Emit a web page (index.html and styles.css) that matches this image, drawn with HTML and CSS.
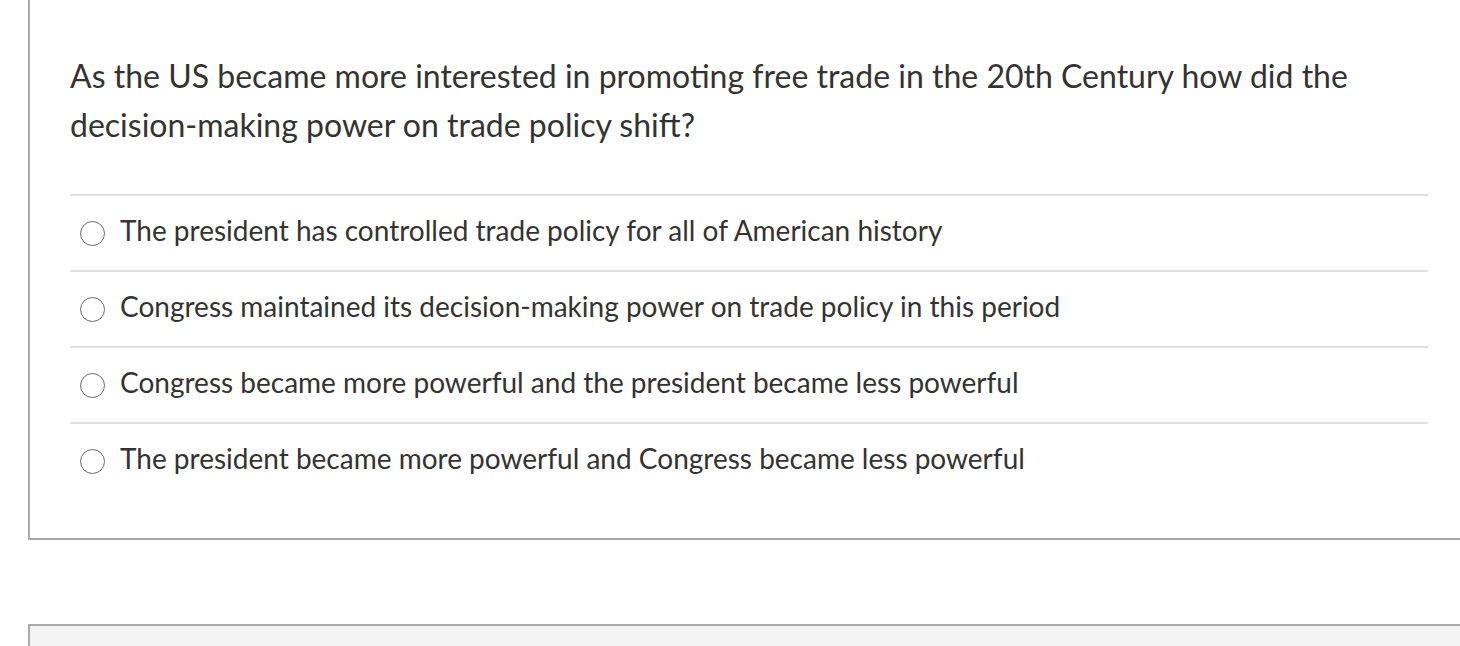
FILE: index.html
```html
<!DOCTYPE html>
<html>
<head>
<meta charset="utf-8">
<link rel="stylesheet" href="styles.css">
</head>
<body>
<div class="question">
  <div class="question-text">As the US became more interested in promoting free trade in the 20th Century how did the decision-making power on trade policy shift?</div>
  <div class="answers">
    <label class="answer"><span class="radio"></span><span class="answer-text">The president has controlled trade policy for all of American history</span></label>
    <label class="answer"><span class="radio"></span><span class="answer-text">Congress maintained its decision-making power on trade policy in this period</span></label>
    <label class="answer"><span class="radio"></span><span class="answer-text">Congress became more powerful and the president became less powerful</span></label>
    <label class="answer"><span class="radio"></span><span class="answer-text">The president became more powerful and Congress became less powerful</span></label>
  </div>
</div>
<div class="question next"></div>
</body>
</html>
```

FILE: styles.css
```css
html, body {
  margin: 0;
  padding: 0;
  background: #fff;
  overflow: hidden;
}
body {
  font-family: Lato, "Noto Sans", sans-serif;
  color: #333;
}
.question {
  margin-left: 28px;
  border-left: 2px solid #aaa;
  border-bottom: 2px solid #aaa;
  padding: 51px 32px 40px 40px;
}
.question-text {
  font-size: 32px;
  line-height: 49px;
  margin-bottom: 45px;
}
.answer {
  display: flex;
  align-items: center;
  gap: 15px;
  border-top: 2px solid #e0e0e0;
  padding-left: 10px;
  padding-bottom: 6px;
  box-sizing: border-box;
  height: 76px;
}
.radio {
  width: 23px;
  height: 23px;
  border: 1.5px solid #6b6b6b;
  border-radius: 50%;
  flex: none;
  margin-top: 6px;
}
.answer-text {
  font-size: 28px;
  line-height: 32px;
}
.next {
  margin-top: 84px;
  border-bottom: none;
  border-top: 2px solid #aaa;
  background: #f3f3f3;
  height: 100px;
  padding: 0;
}
```
